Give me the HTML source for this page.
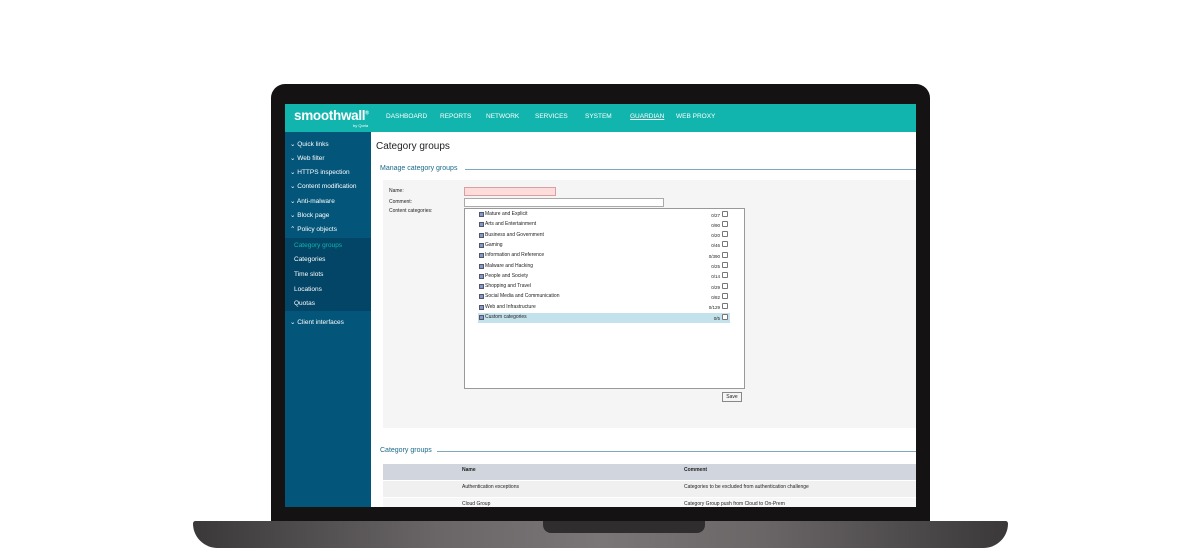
<!DOCTYPE html>
<html><head><meta charset="utf-8"><style>
*{margin:0;padding:0;box-sizing:border-box}
body{width:1200px;height:550px;background:#fff;position:relative;overflow:hidden;font-family:"Liberation Sans",sans-serif}
.a{position:absolute}
.bezel{left:271px;top:84px;width:659px;height:438px;background:#141212;border-radius:14px 14px 0 0}
.base{left:193px;top:521px;width:815px;height:27px;background:linear-gradient(90deg,#3a3839,#6a6667 30%,#7a7677 50%,#6a6667 70%,#3a3839);border-radius:3px 3px 30px 30px}
.notch{left:543px;top:521px;width:162px;height:12px;background:#2f2d2e;border-radius:0 0 8px 8px}
.screen{left:285px;top:104px;width:631px;height:403px;background:#fff;overflow:hidden}
.hdr{left:0;top:0;width:631px;height:28px;background:#12b5ad;color:#fff}
.logo{left:9px;top:4px;font-size:13.5px;font-weight:bold;letter-spacing:-.3px}
.by{left:68px;top:19px;font-size:4px}
.nav{top:9px;font-size:6.5px}
.side{left:0;top:28px;width:86px;height:375px;background:#03567a;color:#fff;font-size:6.5px}
.sub{left:0;top:106px;width:86px;height:73px;background:#024566}
.si{left:5px}
.ss{left:9px}
.sm{font-size:5px;color:#222}
</style></head><body>
<div class="a bezel"></div>
<div class="a base"></div>
<div class="a notch"></div>
<div class="a screen">
 <div class="a hdr">
  <div class="a logo">smoothwall<sup style="font-size:5px">®</sup></div>
  <div class="a by">by Qoria</div>
  <div class="a nav" style="left:101px">DASHBOARD</div>
  <div class="a nav" style="left:155px">REPORTS</div>
  <div class="a nav" style="left:201px">NETWORK</div>
  <div class="a nav" style="left:250px">SERVICES</div>
  <div class="a nav" style="left:300px">SYSTEM</div>
  <div class="a nav" style="left:345px;text-decoration:underline">GUARDIAN</div>
  <div class="a nav" style="left:391px">WEB PROXY</div>
 </div>
 <div class="a side">
  <div class="a sub"></div>
  <div class="a si" style="top:8px">⌄ Quick links</div>
  <div class="a si" style="top:22px">⌄ Web filter</div>
  <div class="a si" style="top:36px">⌄ HTTPS inspection</div>
  <div class="a si" style="top:50px">⌄ Content modification</div>
  <div class="a si" style="top:65px">⌄ Anti-malware</div>
  <div class="a si" style="top:79px">⌄ Block page</div>
  <div class="a si" style="top:93px">⌃ Policy objects</div>
  <div class="a ss" style="top:110px;color:#12b5ad">Category groups</div>
  <div class="a ss" style="top:124px">Categories</div>
  <div class="a ss" style="top:139px">Time slots</div>
  <div class="a ss" style="top:154px">Locations</div>
  <div class="a ss" style="top:168px">Quotas</div>
  <div class="a si" style="top:186px">⌄ Client interfaces</div>
 </div>
 <div class="a" style="left:91px;top:37px;font-size:10px;color:#222">Category groups</div>
 <div class="a" style="left:95px;top:61px;font-size:7px;color:#1a6a8a">Manage category groups</div>
 <div class="a" style="left:180px;top:65px;width:451px;height:1px;background:#7ea8bb"></div>
 <div class="a" style="left:98px;top:76px;width:533px;height:248px;background:#f5f5f5"></div>
 <div class="a sm" style="left:104px;top:84px">Name:</div>
 <div class="a sm" style="left:104px;top:95px">Comment:</div>
 <div class="a sm" style="left:104px;top:104px">Content categories:</div>
 <div class="a" style="left:179px;top:83px;width:92px;height:9px;background:#fddcdc;border:1px solid #d9a0a0"></div>
 <div class="a" style="left:179px;top:94px;width:200px;height:9px;background:#fff;border:1px solid #aaa"></div>
 <div class="a" style="left:179px;top:104px;width:281px;height:181px;background:#fff;border:1px solid #999"></div>
 <div class="a" style="left:193px;top:209px;width:252px;height:10px;background:#c4e2ec"></div>
 <div class="a sm" style="left:437px;top:288px;width:20px;height:10px;border:1px solid #888;background:#f5f5f5;text-align:center;line-height:8px">Save</div>
 <div class="a" style="left:95px;top:343px;font-size:7px;color:#1a6a8a">Category groups</div>
 <div class="a" style="left:152px;top:347px;width:479px;height:1px;background:#7ea8bb"></div>
 <div class="a" style="left:98px;top:360px;width:533px;height:16px;background:#d1d5de"></div>
 <div class="a sm" style="left:177px;top:363px;font-weight:bold">Name</div>
 <div class="a sm" style="left:399px;top:363px;font-weight:bold">Comment</div>
 <div class="a" style="left:98px;top:377px;width:533px;height:16px;background:#f0f0f0"></div>
 <div class="a sm" style="left:177px;top:380px">Authentication exceptions</div>
 <div class="a sm" style="left:399px;top:380px">Categories to be excluded from authentication challenge</div>
 <div class="a" style="left:98px;top:394px;width:533px;height:16px;background:#f7f7f7"></div>
 <div class="a sm" style="left:177px;top:397px">Cloud Group</div>
 <div class="a sm" style="left:399px;top:397px">Category Group push from Cloud to On-Prem</div>
</div>
<script>
var c=[["Mature and Explicit","0/27"],["Arts and Entertainment","0/90"],["Business and Government","0/20"],["Gaming","0/46"],["Information and Reference","0/390"],["Malware and Hacking","0/25"],["People and Society","0/14"],["Shopping and Travel","0/29"],["Social Media and Communication","0/82"],["Web and Infrastructure","0/129"],["Custom categories","0/5"]];
var h="";c.forEach(function(r,i){var y=107+i*10.3;
h+='<div class="a" style="left:194px;top:'+(y+1)+'px;width:5px;height:5px;background:#7f9acb;border:1px solid #556"></div>';
h+='<div class="a sm" style="left:200px;top:'+y+'px">'+r[0]+'</div>';
h+='<div class="a" style="left:400px;top:'+(y+1.5)+'px;width:35px;text-align:right;font-size:4.5px;color:#222">'+r[1]+'</div>';
h+='<div class="a" style="left:437px;top:'+(y-0.5)+'px;width:6px;height:6px;border:1px solid #777;border-radius:1px;background:#fff"></div>';});
document.querySelector('.screen').insertAdjacentHTML('beforeend',h);
</script>
</body></html>
